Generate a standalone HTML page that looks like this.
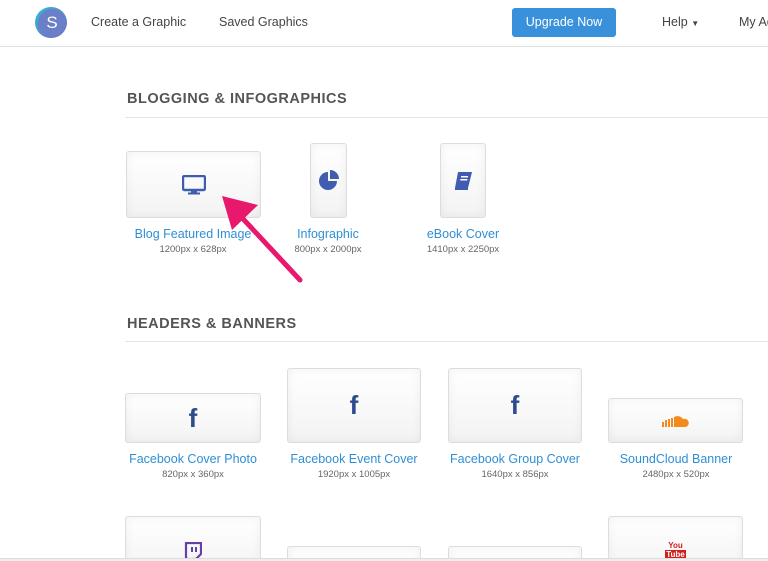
<!DOCTYPE html><html><head><style>
*{margin:0;padding:0;box-sizing:border-box}
html,body{width:768px;height:561px;overflow:hidden}
body{background:#fff;font-family:"Liberation Sans",sans-serif;position:relative}
.a{position:absolute;white-space:nowrap}
.nav{font-size:12.5px;color:#444}
.h{font-size:14.5px;font-weight:bold;color:#555;letter-spacing:.5px}
.line{height:1px;background:#e4e4e4;left:125px;right:0}
.card{position:absolute;background:linear-gradient(#fff,#f3f3f3);border:1px solid #ddd;border-radius:3px;box-shadow:inset 0 0 10px rgba(0,0,0,.06);display:flex;align-items:center;justify-content:center;overflow:hidden}
.lbl{position:absolute;font-size:12.5px;color:#2f8fd4;text-align:center;width:180px;margin-left:-90px;white-space:nowrap}
.sz{position:absolute;font-size:9.5px;color:#666;text-align:center;width:160px;margin-left:-80px}
.f{font-weight:bold;font-size:26px;color:#2d4b8e;font-family:"Liberation Sans",sans-serif}
</style></head><body>
<div class="a" style="left:0;top:0;width:768px;height:47px;border-bottom:1px solid #e2e2e2"></div>
<div class="a" style="left:35px;top:7px;width:32px;height:31px;border-radius:50%;background:linear-gradient(135deg,#28c2d9,#7b5fb5);"></div>
<div class="a" style="left:38px;top:9px;width:28px;height:28px;border-radius:50%;background:#6a7fc8;color:#fff;font-size:17px;text-align:center;line-height:28px">S</div>
<div class="a nav" style="left:91px;top:15px">Create a Graphic</div>
<div class="a nav" style="left:219px;top:15px">Saved Graphics</div>
<div class="a" style="left:512px;top:8px;width:104px;height:29px;background:#3a91db;border-radius:3px;color:#fff;font-size:12.5px;text-align:center;line-height:29px">Upgrade Now</div>
<div class="a nav" style="left:662px;top:15px">Help <span style="font-size:8px">▼</span></div>
<div class="a nav" style="left:739px;top:15px">My Ac</div>

<div class="a h" style="left:127px;top:91px">BLOGGING &amp; INFOGRAPHICS</div>
<div class="a line" style="top:117px"></div>
<div class="card" style="left:126px;top:151px;width:135px;height:67px"><svg width="24" height="20" viewBox="0 0 24 20"><rect x="1" y="1" width="22" height="14" rx="1.5" fill="none" stroke="#3f5cb0" stroke-width="2.4"/><rect x="9" y="15" width="6" height="3" fill="#3f5cb0"/><rect x="6" y="17.5" width="12" height="2" fill="#3f5cb0"/></svg></div>
<div class="card" style="left:310px;top:143px;width:37px;height:75px"><svg width="22" height="22" viewBox="0 0 22 22"><path d="M10 2A9 9 0 1 0 19 11H10Z" fill="#3f5cb0"/><path d="M12 0A9 9 0 0 1 21 9H12Z" fill="#3f5cb0"/></svg></div>
<div class="card" style="left:440px;top:143px;width:46px;height:75px"><svg width="20" height="20" viewBox="0 0 20 20"><path d="M5 1H19L15 17H2Z" fill="#3f5cb0"/><path d="M2 17H15V19H2Z" fill="#3f5cb0"/><rect x="8" y="5" width="7" height="1.5" fill="#fff"/><rect x="7.3" y="8" width="7" height="1.5" fill="#fff"/></svg></div>
<div class="lbl" style="left:193px;top:227px">Blog Featured Image</div><div class="sz" style="left:193px;top:244px">1200px x 628px</div>
<div class="lbl" style="left:328px;top:227px">Infographic</div><div class="sz" style="left:328px;top:244px">800px x 2000px</div>
<div class="lbl" style="left:463px;top:227px">eBook Cover</div><div class="sz" style="left:463px;top:244px">1410px x 2250px</div>

<svg class="a" style="left:210px;top:185px" width="100" height="100"><line x1="90" y1="95" x2="22" y2="22" stroke="#e8186d" stroke-width="5" stroke-linecap="round"/><path d="M12 11L48 20L22 45Z" fill="#e8186d"/></svg>

<div class="a h" style="left:127px;top:316px">HEADERS &amp; BANNERS</div>
<div class="a line" style="top:341px"></div>
<div class="card" style="left:125px;top:393px;width:136px;height:50px"><span class="f">f</span></div>
<div class="card" style="left:287px;top:368px;width:134px;height:75px"><span class="f">f</span></div>
<div class="card" style="left:448px;top:368px;width:134px;height:75px"><span class="f">f</span></div>
<div class="card" style="left:608px;top:398px;width:135px;height:45px"><svg width="30" height="14" viewBox="0 0 30 14"><path d="M2 13V8M5 13V6M8 13V5M11 13V4" stroke="#f38a1d" stroke-width="2"/><path d="M13 13V3A7 7 0 0 1 22 5A4 4 0 1 1 25 13Z" fill="#f38a1d"/></svg></div>
<div class="lbl" style="left:193px;top:452px">Facebook Cover Photo</div><div class="sz" style="left:193px;top:469px">820px x 360px</div>
<div class="lbl" style="left:354px;top:452px">Facebook Event Cover</div><div class="sz" style="left:354px;top:469px">1920px x 1005px</div>
<div class="lbl" style="left:515px;top:452px">Facebook Group Cover</div><div class="sz" style="left:515px;top:469px">1640px x 856px</div>
<div class="lbl" style="left:676px;top:452px">SoundCloud Banner</div><div class="sz" style="left:676px;top:469px">2480px x 520px</div>

<div class="card" style="left:125px;top:516px;width:136px;height:60px;align-items:flex-start;padding-top:25px"><svg width="18" height="20" viewBox="0 0 18 20"><path d="M2 1H17V12L12 17H8L5 20V17H2Z" fill="none" stroke="#6441a4" stroke-width="2.2"/><path d="M8 5V10M12 5V10" stroke="#6441a4" stroke-width="2"/></svg></div>
<div class="card" style="left:287px;top:546px;width:134px;height:40px"></div>
<div class="card" style="left:448px;top:546px;width:134px;height:40px"></div>
<div class="card" style="left:608px;top:516px;width:135px;height:60px;align-items:flex-start;padding-top:24px"><div style="font-size:8px;font-weight:bold;color:#d0201b;text-align:center;line-height:9px">You<br><span style="background:#d0201b;color:#fff;padding:0 1px">Tube</span></div></div>
<div class="a" style="left:0;top:558px;width:768px;height:3px;background:#eee;border-top:1px solid #ddd"></div>
</body></html>
